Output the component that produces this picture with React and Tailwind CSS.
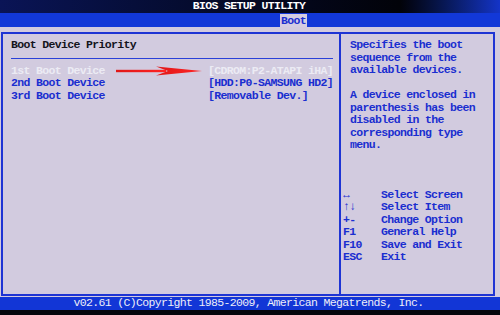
import React from "react";

const bootRows = [
  { label: "1st Boot Device", value: "[CDROM:P2-ATAPI iHA]", active: true },
  { label: "2nd Boot Device", value: "[HDD:P0-SAMSUNG HD2]" },
  { label: "3rd Boot Device", value: "[Removable Dev.]" },
];

const helpLines = [
  "Specifies the boot",
  "sequence from the",
  "available devices.",
  "",
  "A device enclosed in",
  "parenthesis has been",
  "disabled in the",
  "corresponding type",
  "menu.",
];

const keys = [
  ["↔", "Select Screen"],
  ["↑↓", "Select Item"],
  ["+-", "Change Option"],
  ["F1", "General Help"],
  ["F10", "Save and Exit"],
  ["ESC", "Exit"],
];

const Arrow = () => (
  <svg width="90" height="12" viewBox="0 0 90 12" className="shrink-0">
    <defs>
      <linearGradient id="ar" x1="0" x2="1" y1="0" y2="0">
        <stop offset="0" stopColor="#e01818" />
        <stop offset="1" stopColor="#ff2424" />
      </linearGradient>
    </defs>
    <rect x="0" y="4.8" width="50" height="2.4" fill="url(#ar)" />
    <polygon points="40,1.5 86,6 40,10.5 52,6" fill="url(#ar)" />
  </svg>
);

const App = () => {
  return (
    <div
      className="w-[500px] h-[315px] flex flex-col bg-black overflow-hidden text-[11.5px] tracking-[-0.65px] leading-[12.5px] font-bold"
      style={{ fontFamily: '"Liberation Mono", "DejaVu Sans Mono", monospace' }}
    >
      <div className="h-[13px] bg-gradient-to-r from-[#0a1456] via-[#020309] via-80% to-[#1434c8] flex items-center justify-center text-white">
        <span className="pr-[2px]">BIOS SETUP UTILITY</span>
      </div>
      <div className="h-[14px] bg-[#1238d8] flex items-end pl-[280px]">
        <span className="h-[13px] px-[1px] bg-[#d4cde2] text-[#1a2ed0] leading-[13px]">Boot</span>
      </div>

      <div className="h-[270px] bg-[#d2cbdf] pt-[5px] pl-[1px] pr-[5px] pb-[1px]">
        <div className="h-full flex border-2 border-[#1e34d4]">
          <div className="w-[338px] border-r-2 border-[#1e34d4] pt-[5px] pl-[8px] pr-[6px]">
            <div className="text-[#14141c]">Boot Device Priority</div>
            <div className="mt-[6px] mb-[6px] h-[1px] bg-[#2a40d8]" />
            {bootRows.map((r) => (
              <div
                key={r.label}
                className={`flex items-center ${r.active ? "text-[#ecebf4]" : "text-[#1a2ed0]"}`}
              >
                <span className="w-[105px] shrink-0 whitespace-pre">{r.label}</span>
                {r.active ? <Arrow /> : <span className="w-[90px] shrink-0" />}
                <span className="ml-[2px] whitespace-pre">{r.value}</span>
              </div>
            ))}
          </div>

          <div className="flex-1 flex flex-col pt-[5px] text-[#1a2ed0]">
            <div className="pl-[9px]">
              {helpLines.map((l, i) => (
                <div key={i} className="h-[12.5px] whitespace-pre">
                  {l}
                </div>
              ))}
            </div>
            <div className="mt-[37px] pl-[2px]">
              {keys.map(([k, d]) => (
                <div key={k} className="flex">
                  <span className="w-[38px] shrink-0">{k}</span>
                  <span>{d}</span>
                </div>
              ))}
            </div>
          </div>
        </div>
      </div>

      <div className="h-[13px] bg-[#1236d6] flex items-center justify-center text-[#eeeef8]">
        <span className="font-normal pr-[3px]">v02.61 (C)Copyright 1985-2009, American Megatrends, Inc.</span>
      </div>
      <div className="flex-1 bg-[#05060c]" />
    </div>
  );
};

export default App;
